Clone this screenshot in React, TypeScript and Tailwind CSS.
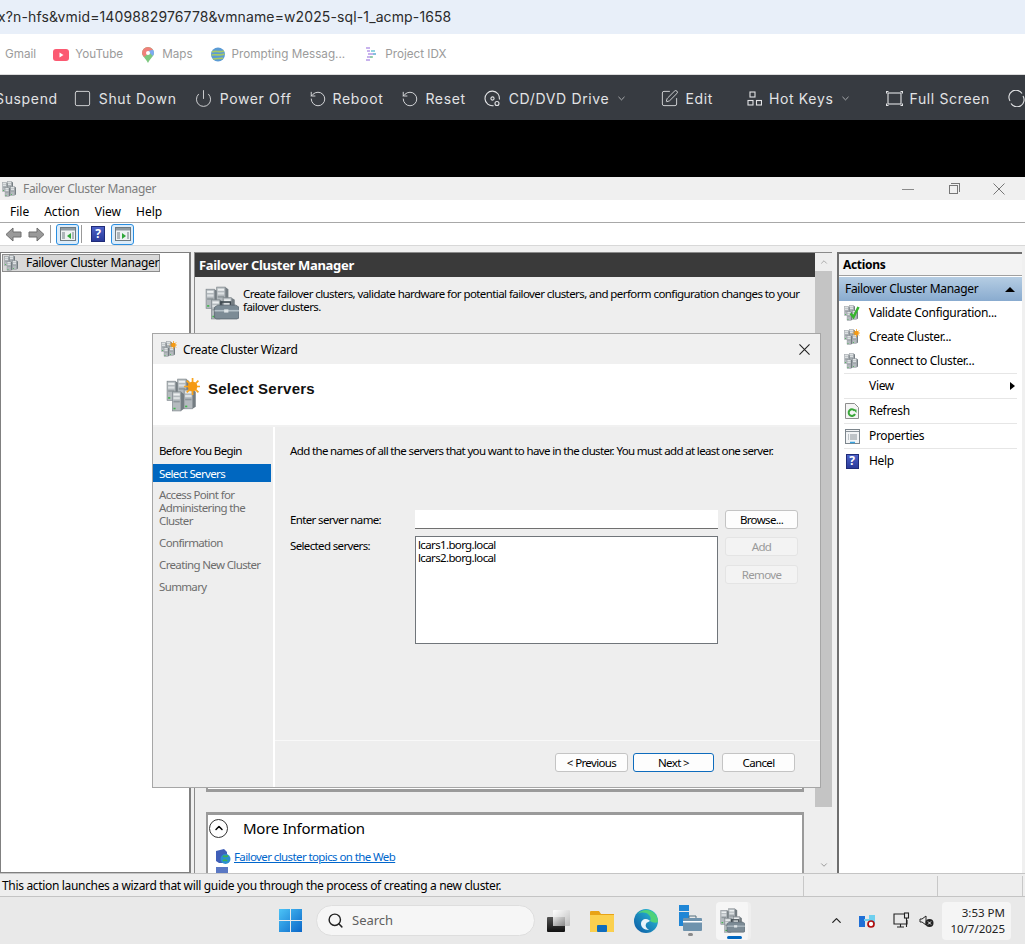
import { ChevronDown, ChevronUp, Power, RotateCcw, Search, Square, SquarePen } from "lucide-react";

const WIN = "font-['Noto_Sans',sans-serif]";
const WEB = "font-['Inter',sans-serif]";

function Rack({ x, y }: { x: number; y: number }) {
  return (
    <g transform={`translate(${x} ${y})`}>
      <path d="M8 0l3 2v14l-3 2z" fill="#747d82" />
      <rect width="8" height="18" fill="#b4babe" stroke="#7b8388" strokeWidth="0.6" />
      <rect x="1" y="1.500" width="6" height="2" fill="#eceff0" />
      <rect x="1" y="5" width="6" height="2" fill="#dde1e3" />
      <rect x="1" y="8.500" width="6" height="1.500" fill="#8f979b" />
      <rect x="1" y="15" width="2" height="1.500" fill="#3fb54a" />
    </g>
  );
}

// small cluster glyph: racks with an optional badge on top
function ClusterIcon({ size = 16, badge }: { size?: number; badge?: "sun" | "check" | "box" }) {
  return (
    <svg width={size} height={size} viewBox="0 0 32 32" className="shrink-0">
      <Rack x={1} y={3} />
      <Rack x={11} y={1} />
      <Rack x={6} y={13} />
      <Rack x={17} y={11} />
      {badge === "sun" && (
        <g>
          <path d="M25 0v16M17 8h15M19.500 2.500l11 11M30.500 2.500l-11 11" stroke="#f9a51f" strokeWidth="1.600" />
          <circle cx="25" cy="8" r="4.500" fill="#f59a13" />
        </g>
      )}
      {badge === "check" && <path d="M13 17l6 7L29 4" stroke="#37b52e" strokeWidth="5" fill="none" />}
      {badge === "box" && (
        <g>
          <path d="M15 18v-3h9v3" stroke="#3d474e" strokeWidth="1.500" fill="none" />
          <path d="M9 20l3-2h17l3 2v10l-2 1H11l-2-1z" fill="#7c8b95" stroke="#56636c" strokeWidth="0.700" />
          <rect x="9" y="22.500" width="23" height="1.500" fill="#b5c1c8" />
          <rect x="18" y="22" width="4" height="3" fill="#dfe5e8" />
        </g>
      )}
    </svg>
  );
}

function HelpIcon({ size = 15 }: { size?: number }) {
  return (
    <span
      style={{ width: size - 2, height: size }}
      className={`flex items-center justify-center bg-gradient-to-b from-[#4d62c8] to-[#2a3a9a] border border-[#1f2b78] text-white text-[12px] font-bold leading-none ${WIN}`}
    >
      ?
    </span>
  );
}

function PaneIcon({ right }: { right?: boolean }) {
  return (
    <span className="w-[23px] h-[21px] flex items-center justify-center rounded-[3px] border border-[#2a8ee0] bg-[#dcecfa]">
      <svg width="16" height="14" viewBox="0 0 16 14">
        <rect x="0.500" y="0.500" width="15" height="13" fill="#eef1f3" stroke="#6f7a80" />
        <rect x="1" y="1" width="14" height="2.500" fill="#8f9aa1" />
        <rect x="2" y="5" width="3" height="7" fill="#aeb6bb" />
        {right ? <path d="M7 6l4 3-4 3z" fill="#2fa73a" /> : <path d="M11 6L7 9l4 3z" fill="#2fa73a" />}
        <rect x="12" y="5" width="2" height="7" fill="#aeb6bb" />
      </svg>
    </span>
  );
}

function NavArrow({ right }: { right?: boolean }) {
  return (
    <svg width="17" height="15" viewBox="0 0 17 15">
      <path d={right ? "M1 5h8V1l7 6.500L9 14v-4H1z" : "M16 5H8V1L1 7.500 8 14v-4h8z"} fill="#9a9a9a" stroke="#6f6f6f" />
    </svg>
  );
}

function Cross({ size, color, sw = 1 }: { size: number; color: string; sw?: number }) {
  return (
    <svg width={size} height={size} viewBox="0 0 12 12" fill="none" stroke={color} strokeWidth={sw}>
      <path d="M0.500 0.500l11 11M11.500 0.500l-11 11" />
    </svg>
  );
}

function BrowserToolbar() {
  const text = "text-[14px] tracking-[0.65px] text-[#e2e3e5] leading-none whitespace-nowrap";
  return (
    <div className={`h-[45px] shrink-0 bg-[#373b41] flex items-center overflow-hidden pt-[2px] ${WEB} ${text}`}>
      <span className="ml-[-5px]">Suspend</span>
      <Square className="ml-[15px] w-[19px] h-[19px]" strokeWidth={1.1} />
      <span className="ml-[7px]">Shut Down</span>
      <Power className="ml-[17px] w-[19px] h-[19px]" strokeWidth={1.1} />
      <span className="ml-[7px]">Power Off</span>
      <RotateCcw className="ml-[17px] w-[18px] h-[18px]" strokeWidth={1.2} />
      <span className="ml-[6px]">Reboot</span>
      <RotateCcw className="ml-[18px] w-[18px] h-[18px]" strokeWidth={1.2} />
      <span className="ml-[6px]">Reset</span>
      <svg className="ml-[18px]" width="17" height="17" viewBox="0 0 17 17" fill="none" stroke="currentColor" strokeWidth="1.100">
        <path d="M15.500 9.500A7.300 7.300 0 1 0 9.500 15.600" />
        <circle cx="8.500" cy="8.500" r="1.600" />
        <circle cx="13" cy="13.500" r="2" />
      </svg>
      <span className="ml-[8px]">CD/DVD Drive</span>
      <ChevronDown className="ml-[7px] w-[11px] h-[11px]" strokeWidth={1.5} />
      <SquarePen className="ml-[33px] w-[19px] h-[19px]" strokeWidth={1.1} />
      <span className="ml-[6px]">Edit</span>
      <svg className="ml-[34px]" width="15" height="15" viewBox="0 0 15 15" fill="none" stroke="currentColor" strokeWidth="1.100">
        <rect x="3" y="1" width="5" height="5" />
        <rect x="1" y="9.500" width="5" height="4.500" />
        <rect x="9.500" y="9.500" width="5" height="4.500" />
      </svg>
      <span className="ml-[7px]">Hot Keys</span>
      <ChevronDown className="ml-[7px] w-[11px] h-[11px]" strokeWidth={1.5} />
      <svg className="ml-[35px]" width="17" height="15" viewBox="0 0 17 15" fill="none" stroke="currentColor" strokeWidth="1.100">
        <rect x="2" y="2" width="13" height="11" />
        <path d="M0.500 2.500v-2h2M14.500 0.500h2v2M0.500 12.500v2h2M16.500 12.500v2h-2" />
      </svg>
      <span className="ml-[6px]">Full Screen</span>
      <svg className="ml-[18px] shrink-0" width="17" height="17" viewBox="0 0 17 17" fill="none" stroke="currentColor" strokeWidth="1.100">
        <path d="M2 11A7 7 0 0 1 14 3.500M15 6a7 7 0 0 1-12 7.500" />
      </svg>
    </div>
  );
}

function Bookmarks() {
  return (
    <div className={`h-[41px] shrink-0 bg-white border-b border-[#dcdcdc] flex items-center pt-[1px] text-[11.7px] leading-none text-[#9b9b9b] whitespace-nowrap ${WEB}`}>
      <span className="ml-[5px]">Gmail</span>
      <svg className="ml-[17px]" width="16" height="12" viewBox="0 0 16 12">
        <rect width="16" height="12" rx="3" fill="#fb5a72" />
        <path d="M6.500 3.500l4 2.500-4 2.500z" fill="#fff" />
      </svg>
      <span className="ml-[6px]">YouTube</span>
      <svg className="ml-[19px]" width="12" height="16" viewBox="0 0 12 16">
        <path d="M6 0a6 6 0 0 1 6 6c0 3-3.500 5-6 10C3.500 11 0 9 0 6a6 6 0 0 1 6-6z" fill="#7dc87f" />
        <path d="M6 0a6 6 0 0 1 5 2.700L2 10C1 8.500 0 7.500 0 6a6 6 0 0 1 6-6z" fill="#f0807a" />
        <path d="M11 2.700A6 6 0 0 1 12 6c0 1-.5 2-1.200 3L6 4z" fill="#7eaaf2" />
        <circle cx="6" cy="6" r="2" fill="#fff" />
      </svg>
      <span className="ml-[8px]">Maps</span>
      <svg className="ml-[18px]" width="14" height="15" viewBox="0 0 14 15">
        <circle cx="7" cy="7.500" r="7" fill="#5b9bd5" />
        <path d="M1 5c3-2 8 1 12-1M0.500 8c4-1 9 1 13-1M2 12c3-1 7 0 10-1" stroke="#a7c969" strokeWidth="1.700" fill="none" />
      </svg>
      <span className="ml-[7px]">Prompting Messag...</span>
      <svg className="ml-[20px]" width="12" height="15" viewBox="0 0 12 15">
        <path d="M1 1h4M2 4h3M3 7h8M2 10h5M1 13h4" strokeWidth="1.500" stroke="#b79ae8" />
        <path d="M6 4h4M8 7h3" strokeWidth="1.500" stroke="#70c5d8" />
        <path d="M5 10h3" strokeWidth="1.500" stroke="#85cf9b" />
      </svg>
      <span className="ml-[8px]">Project IDX</span>
    </div>
  );
}

function ActionRow({ icon, label, arrow, line }: { icon?: React.ReactNode; label: string; arrow?: boolean; line?: boolean }) {
  return (
    <div className={`flex items-center ${line ? "h-[25px] border-t border-[#e6e6e6]" : "h-[24px]"}`}>
      <span className="w-[16px] flex justify-center">{icon}</span>
      <span className="ml-[9px] flex-1">{label}</span>
      {arrow && <span className="w-0 h-0 mr-[2px] border-y-[4px] border-y-transparent border-l-[5px] border-l-black" />}
    </div>
  );
}

function ActionsPane() {
  return (
    <div className="w-[185px] ml-[5px] shrink-0 bg-white border-l-2 border-t-2 border-[#6f6f6f] text-[12px] leading-none tracking-[-0.32px] text-black">
      <div className="h-[22px] flex items-center pl-[4px] pt-[1px] font-bold border-b border-[#a0a0a0] bg-[#f3f3f3]">Actions</div>
      <div className="mt-[1px] h-[24px] flex items-center justify-between pl-[6px] pr-[7px] bg-gradient-to-b from-[#b5cde3] to-[#89abcf]">
        <span>Failover Cluster Manager</span>
        <span className="w-0 h-0 border-x-[5px] border-x-transparent border-b-[5px] border-b-black" />
      </div>
      <div className="pl-[5px] pr-[5px]">
        <ActionRow icon={<ClusterIcon badge="check" />} label="Validate Configuration..." />
        <ActionRow icon={<ClusterIcon badge="sun" />} label="Create Cluster..." />
        <ActionRow icon={<ClusterIcon />} label="Connect to Cluster..." />
        <ActionRow line label="View" arrow />
        <ActionRow
          line
          icon={
            <svg width="14" height="16" viewBox="0 0 14 16">
              <path d="M.5.5h9l4 4v11H.5z" fill="#f4f4f4" stroke="#8d8d8d" />
              <path d="M9.500 7.500A3.300 3.300 0 1 0 10 11" fill="none" stroke="#3aa63a" strokeWidth="2" />
              <path d="M8 6.500h3.500V10z" fill="#3aa63a" />
            </svg>
          }
          label="Refresh"
        />
        <ActionRow
          line
          icon={
            <svg width="15" height="15" viewBox="0 0 15 15">
              <rect x=".5" y=".5" width="14" height="14" fill="#f2f4f6" stroke="#7c858c" />
              <path d="M1 2.500h13M5 6h7M5 8h7M5 10h7" stroke="#8a939a" />
              <path d="M3 6h1M3 8h1M3 10h1" stroke="#8a939a" />
              <path d="M5 13.500h5" stroke="#38a3e0" strokeWidth="1.500" />
            </svg>
          }
          label="Properties"
        />
        <ActionRow line icon={<HelpIcon />} label="Help" />
      </div>
    </div>
  );
}

function CenterPane() {
  return (
    <div className="w-[638px] ml-[3px] shrink-0 flex bg-[#eeeeee] border-l border-t border-[#8a8a8a]">
      <div className="w-[620px] shrink-0 flex flex-col overflow-hidden">
        <div className="h-[24px] shrink-0 bg-[#3a3a3a] text-white font-bold text-[13px] leading-none tracking-[-0.33px] flex items-center pl-[4px] pt-[1px]">
          Failover Cluster Manager
        </div>
        <div className="flex pl-[10px] pt-[9px] h-[491px] shrink-0">
          <ClusterIcon size={34} badge="box" />
          <p className="ml-[4px] w-[565px] text-[11.5px] leading-[13px] tracking-[-0.58px] mt-[1px]">
            Create failover clusters, validate hardware for potential failover clusters, and perform configuration changes to your failover clusters.
          </p>
        </div>
        <div className="h-[24px] shrink-0 mx-[11px] border-x-2 border-b-[3px] border-[#9a9a9a] bg-white" />
        <div className="mt-[20px] mx-[11px] flex-1 min-h-0 overflow-hidden border-x-2 border-t-[3px] border-[#9a9a9a] bg-white">
          <div className="flex items-center h-[26px] pl-[1px]">
            <span className="w-[19px] h-[19px] rounded-full border border-[#333] flex items-center justify-center">
              <ChevronUp className="w-[12px] h-[12px]" strokeWidth={3} />
            </span>
            <span className="ml-[15px] text-[15px] tracking-[-0.25px] leading-none">More Information</span>
          </div>
          <div className="mt-[8px] pl-[8px] flex items-center text-[11.5px] leading-none">
            <svg width="15" height="16" viewBox="0 0 15 16">
              <path d="M0 2l8-2 3 3v11H3L0 12z" fill="#3f5fb8" />
              <circle cx="9.500" cy="10" r="5" fill="#2b8fd0" />
              <path d="M7 7c2 1 3 1 5-.5M7 12c2-2 3-1 4 0" stroke="#3fb54a" strokeWidth="1.600" fill="none" />
            </svg>
            <a className="ml-[3px] text-[#0066cc] underline tracking-[-0.6px]">Failover cluster topics on the Web</a>
          </div>
          <div className="mt-[2px] ml-[8px] w-[12px] h-[6px] bg-[#5a78c4]" />
        </div>
      </div>
      <div className="w-[17px] shrink-0 flex flex-col bg-[#eeeeee]">
        <div className="h-[18px] flex items-center justify-center">
          <ChevronUp className="w-[10px] h-[10px] text-[#a0a0a0]" />
        </div>
        <div className="h-[536px] bg-[#c4c4c4]" />
        <div className="flex-1 flex items-end justify-center pb-[3px]">
          <ChevronDown className="w-[10px] h-[10px] text-[#8a8a8a]" />
        </div>
      </div>
    </div>
  );
}

function WizButton({ label, disabled, primary, w = "w-[73px]" }: { label: string; disabled?: boolean; primary?: boolean; w?: string }) {
  const tone = disabled
    ? "border-[#e4e4e4] bg-[#f3f3f3] text-[#9a9a9a]"
    : primary
      ? "border-[#0f6cbd] bg-[#fdfdfd] text-black"
      : "border-[#c4c4c4] bg-[#fdfdfd] text-black";
  return <div className={`${w} h-[19px] rounded-[3px] border ${tone} flex items-center justify-center`}>{label}</div>;
}

function StepItem({ label, active, dim }: { label: string; active?: boolean; dim?: boolean }) {
  return (
    <div className={`pl-[6px] pr-[2px] ${active ? "bg-[#0067c0] text-white h-[18px] flex items-center" : dim ? "text-[#6d6d6d]" : "text-black"}`}>
      {label}
    </div>
  );
}

function WizardDialog() {
  return (
    <div className="absolute left-[152px] top-[333px] w-[669px] h-[455px] bg-[#eeeeee] border border-[#a6a6a6] flex flex-col text-[11.5px] leading-[13px] tracking-[-0.64px] text-black">
      <div className="h-[30px] shrink-0 bg-[#f0f0f0] flex items-center pl-[8px] pr-[10px]">
        <ClusterIcon badge="sun" />
        <span className="ml-[6px] text-[12px] tracking-[-0.35px] flex-1">Create Cluster Wizard</span>
        <Cross size={11} color="#222" sw={1.2} />
      </div>
      <div className="h-[63px] shrink-0 bg-white flex items-center pl-[13px] border-b-2 border-[#f1f1f1]">
        <ClusterIcon size={34} badge="sun" />
        <span className="ml-[8px] text-[15px] font-bold tracking-[0.25px] text-[#111] mb-[13px] font-['Liberation_Sans',sans-serif]">Select Servers</span>
      </div>
      <div className="flex-1 flex min-h-0">
        <div className="w-[118px] shrink-0 pt-[17px]">
          <StepItem label="Before You Begin" />
          <div className="h-[7px]" />
          <StepItem label="Select Servers" active />
          <div className="h-[6px]" />
          <StepItem dim label="Access Point for Administering the Cluster" />
          <div className="h-[9px]" />
          <StepItem dim label="Confirmation" />
          <div className="h-[9px]" />
          <StepItem dim label="Creating New Cluster" />
          <div className="h-[9px]" />
          <StepItem dim label="Summary" />
        </div>
        <div className="w-[2px] ml-[2px] shrink-0 bg-white" />
        <div className="flex-1 flex flex-col">
          <div className="flex-1 pl-[15px] pt-[17px]">
            <p className="whitespace-nowrap">Add the names of all the servers that you want to have in the cluster. You must add at least one server.</p>
            <div className="mt-[53px] flex">
              <div className="w-[125px] shrink-0 pt-[3px]">Enter server name:</div>
              <div className="w-[303px] h-[19px] bg-white border-b border-[#707070]" />
              <div className="ml-[7px]"><WizButton label="Browse..." /></div>
            </div>
            <div className="mt-[7px] flex">
              <div className="w-[125px] shrink-0 pt-[3px]">Selected servers:</div>
              <div className="w-[303px] h-[108px] bg-white border border-[#70757a] px-[2px] pt-[1px]">
                <div>lcars1.borg.local</div>
                <div>lcars2.borg.local</div>
              </div>
              <div className="ml-[7px] pt-[1px] flex flex-col gap-[9px]">
                <WizButton disabled label="Add" />
                <WizButton disabled label="Remove" />
              </div>
            </div>
          </div>
          <div className="h-[47px] shrink-0 border-t border-[#f8f8f8] flex justify-end items-start pt-[12px] pr-[25px]">
            <WizButton label="< Previous" />
            <div className="ml-[5px]"><WizButton primary label="Next >" w="w-[81px]" /></div>
            <div className="ml-[8px]"><WizButton label="Cancel" /></div>
          </div>
        </div>
      </div>
    </div>
  );
}

function Taskbar() {
  return (
    <div className={`h-[47px] shrink-0 bg-[#e9e9e9] flex items-center ${WIN}`}>
      <svg className="ml-[279px]" width="23" height="23" viewBox="0 0 23 23">
        <defs>
          <linearGradient id="win" x1="0" y1="0" x2="1" y2="1">
            <stop offset="0" stopColor="#4cc4f7" />
            <stop offset="1" stopColor="#0a66c8" />
          </linearGradient>
        </defs>
        <path d="M0 0h11v11H0zM12 0h11v11H12zM0 12h11v11H0zM12 12h11v11H12z" fill="url(#win)" />
      </svg>
      <div className="ml-[14px] w-[219px] h-[31px] rounded-full bg-[#f6f6f6] border border-[#dedede] flex items-center pl-[10px]">
        <Search className="w-[17px] h-[17px] text-[#222]" strokeWidth={2} />
        <span className="ml-[8px] text-[13px] text-[#5f5f5f] leading-none">Search</span>
      </div>
      <div className="ml-[12px] relative w-[24px] h-[22px]">
        <div className="absolute left-[6px] top-0 w-[17px] h-[16px] bg-gradient-to-br from-white to-[#bdbdbd] rounded-[1px]" />
        <div className="absolute left-0 top-[7px] w-[18px] h-[15px] bg-gradient-to-b from-[#555] to-[#111] rounded-[1px]" />
        <div className="absolute left-[6px] top-[7px] w-[12px] h-[9px] bg-gradient-to-br from-[#e8e8e8] to-[#888]" />
      </div>
      <svg className="ml-[19px]" width="24" height="22" viewBox="0 0 24 22">
        <path d="M0 2a1 1 0 0 1 1-1h8l2 3h13v17a1 1 0 0 1-1 1H1a1 1 0 0 1-1-1z" fill="#e8a317" />
        <path d="M0 5h24v16a1 1 0 0 1-1 1H1a1 1 0 0 1-1-1z" fill="#fbd04e" />
        <rect x="7" y="15" width="10" height="7" rx="1" fill="#0f6cbd" />
      </svg>
      <svg className="ml-[20px]" width="24" height="24" viewBox="0 0 24 24">
        <defs>
          <linearGradient id="edge" x1="0" y1="1" x2="1" y2="0">
            <stop offset="0" stopColor="#0b57a4" />
            <stop offset="1" stopColor="#2fc5d8" />
          </linearGradient>
        </defs>
        <circle cx="12" cy="12" r="12" fill="url(#edge)" />
        <path d="M24 13c0-7-5-12-12-12-3 0-6 1-8 4 3-2 8-2 11 1 2 2 2 4 1 6 3 2 6 2 8 1z" fill="#4fd27a" />
        <path d="M12 10c-3 0-5 2-5 5s3 6 8 6c-3-2-4-4-3-6 .5-2 3-2 4-3-1-1-2-2-4-2z" fill="#e9f4fb" />
      </svg>
      <div className="ml-[21px] w-[23px] flex flex-col items-center">
        <svg width="23" height="26" viewBox="0 0 23 26">
          <rect width="10" height="6" fill="#1f86d6" />
          <rect y="7" width="10" height="14" fill="#1f86d6" />
          <rect x="4" y="13" width="19" height="13" rx="1" fill="#6f93ad" />
          <rect x="4" y="16" width="19" height="1.500" fill="#fff" />
          <path d="M10 13v-2h7v2" stroke="#55707f" fill="none" />
        </svg>
        <span className="mt-[2px] w-[5px] h-[3px] rounded-full bg-[#8a8a8a]" />
      </div>
      <div className="ml-[14px] relative w-[35px] h-[38px] bg-[#f6f6f6] rounded-[4px] border-r-[3px] border-[#efefef] flex items-center justify-center">
        <ClusterIcon size={25} badge="box" />
        <div className="absolute bottom-[1px] left-[11px] w-[15px] h-[3px] rounded-full bg-[#0067c0]" />
      </div>
      <ChevronUp className="ml-[78px] w-[15px] h-[15px] text-[#222]" strokeWidth={2} />
      <svg className="ml-[15px]" width="17" height="14" viewBox="0 0 17 14">
        <rect x="0" y="2" width="6" height="11" fill="#1f6fd6" />
        <rect x="10" y="1" width="6" height="9" fill="#6fd0ef" />
        <path d="M5 6h6" stroke="#6fd0ef" strokeWidth="2" />
        <circle cx="12" cy="10" r="3" fill="#fff" stroke="#b01010" strokeWidth="1.700" />
      </svg>
      <svg className="ml-[17px]" width="17" height="17" viewBox="0 0 17 17" fill="none" stroke="#222" strokeWidth="1.100">
        <path d="M11 2H1v10h13V8M4 15h7M7.500 12v3" />
        <rect x="11.500" y="1" width="4" height="5" />
        <path d="M13.500 6v9" />
      </svg>
      <svg className="ml-[9px]" width="15" height="14" viewBox="0 0 15 14">
        <path d="M1 5v3h2l4 3V2L3 5z" fill="none" stroke="#222" />
        <circle cx="10.500" cy="9" r="4" fill="#222" />
        <path d="M9 7.500l3 3M12 7.500l-3 3" stroke="#fff" />
      </svg>
      <div className="ml-[8px] w-[69px] h-[38px] bg-[#f5f5f5] rounded-[4px] flex flex-col items-end justify-center pr-[6px] text-[11.5px] leading-[16px] text-[#222]">
        <span>3:53 PM</span>
        <span>10/7/2025</span>
      </div>
    </div>
  );
}

export default function App() {
  return (
    <div className={`relative w-[1025px] h-[944px] overflow-hidden flex flex-col bg-[#f0f0f0] ${WIN}`}>
      <div className={`h-[34px] shrink-0 bg-[#e8eff9] flex items-center text-[14px] tracking-[0.12px] leading-none text-[#2b2b2b] whitespace-nowrap ${WEB}`}>
        <span className="ml-[-2px]">x?n-hfs&amp;vmid=1409882976778&amp;vmname=w2025-sql-1_acmp-1658</span>
      </div>
      <Bookmarks />
      <BrowserToolbar />
      <div className="h-[57px] shrink-0 bg-black" />

      <div className="h-[23px] shrink-0 bg-[#f0f0f0] flex items-center pt-[1px] text-[12px] tracking-[-0.33px] leading-none text-[#7d7d7d]">
        <span className="ml-[2px]"><ClusterIcon /></span>
        <span className="ml-[5px] flex-1">Failover Cluster Manager</span>
        <span className="w-[12px] h-px bg-[#8a8a8a] mr-[35px]" />
        <span className="relative w-[9px] h-[9px] border border-[#777] mr-[35px] before:absolute before:left-[1px] before:top-[-3px] before:w-[9px] before:h-[9px] before:border-t before:border-r before:border-[#777]" />
        <span className="mr-[20px]"><Cross size={12} color="#777" /></span>
      </div>
      <div className="h-[23px] shrink-0 bg-white border-b border-[#a8a8a8] flex items-center pt-[1px] text-[12px] leading-none text-black pl-[10px] gap-[15px]">
        <span>File</span>
        <span>Action</span>
        <span>View</span>
        <span>Help</span>
      </div>
      <div className="h-[23px] shrink-0 bg-white border-b border-[#d8d8d8] flex items-center pl-[5px]">
        <NavArrow />
        <span className="ml-[6px]"><NavArrow right /></span>
        <span className="w-px h-[18px] bg-[#999] ml-[5px]" />
        <span className="ml-[5px]"><PaneIcon /></span>
        <span className="w-px h-[18px] bg-[#999] ml-[2px]" />
        <span className="ml-[9px]"><HelpIcon size={16} /></span>
        <span className="ml-[6px]"><PaneIcon right /></span>
      </div>

      <div className="flex-1 min-h-0 flex pt-[6px] text-black">
        <div className="w-[191px] shrink-0 bg-white border border-[#808080] border-r-2 pt-[1px] pl-[1px]">
          <div className="w-[158px] h-[18px] bg-[#d9d9d9] border border-[#8c8c8c] flex items-center text-[12px] tracking-[-0.33px] leading-none pl-[1px]">
            <ClusterIcon />
            <span className="ml-[6px] whitespace-nowrap">Failover Cluster Manager</span>
          </div>
        </div>
        <CenterPane />
        <ActionsPane />
      </div>

      <div className="h-[24px] shrink-0 bg-[#eeeeee] border-y border-[#c4c4c4] flex items-center pt-[1px] text-[12px] tracking-[-0.33px] leading-none text-black">
        <span className="ml-[2px] w-[801px] whitespace-nowrap">This action launches a wizard that will guide you through the process of creating a new cluster.</span>
        <span className="w-px h-[20px] bg-[#c8c8c8]" />
        <span className="ml-[133px] w-px h-[20px] bg-[#c8c8c8]" />
        <span className="ml-[84px] w-px h-[20px] bg-[#c8c8c8]" />
      </div>
      <Taskbar />
      <WizardDialog />
    </div>
  );
}
